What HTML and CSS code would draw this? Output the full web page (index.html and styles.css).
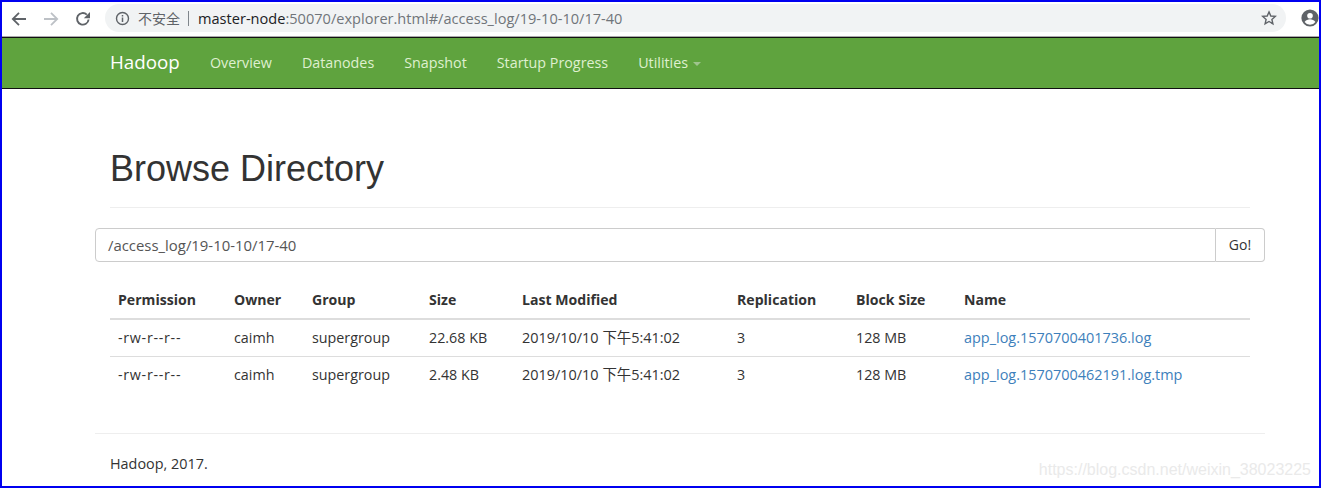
FILE: index.html
```html
<!DOCTYPE html>
<html lang="zh">
<head>
<meta charset="utf-8">
<title>Browsing HDFS</title>
<link rel="stylesheet" href="styles.css">
</head>
<body>
<div class="frame">
  <div class="chrome">
    <svg class="tool" viewBox="0 0 16 16" width="16" height="16"><path d="M15 8H2.5M8 1.8 1.8 8 8 14.2" fill="none" stroke="#5f6368" stroke-width="1.8"/></svg>
    <svg class="tool" viewBox="0 0 16 16" width="16" height="16"><path d="M1 8h12.5M8 1.8 14.2 8 8 14.2" fill="none" stroke="#bdc1c6" stroke-width="1.8"/></svg>
    <svg class="tool" viewBox="0 0 16 16" width="16" height="16"><path d="M13.6 8.5A5.8 5.8 0 1 1 11.8 3.6" fill="none" stroke="#5f6368" stroke-width="1.9"/><path d="M15 1v6.2H8.8z" fill="#5f6368"/></svg>
    <div class="omnibox">
      <svg class="info" viewBox="0 0 16 16" width="15" height="15"><circle cx="8" cy="8" r="6.4" fill="none" stroke="#5f6368" stroke-width="1.5"/><path d="M7.2 7h1.6v4.6H7.2zM7.2 4.2h1.6v1.6H7.2z" fill="#5f6368"/></svg>
      <span class="insecure">不安全</span>
      <span class="sep"></span>
      <span class="url"><span class="host">master-node</span>:50070/explorer.html#/access_log/19-10-10/17-40</span>
      <svg class="star" viewBox="0 0 16 16" width="16" height="16"><path d="M8 1.9 9.8 6l4.500.4-3.400 3 1 4.400L8 11.500l-3.900 2.300 1-4.400-3.400-3L6.200 6z" fill="none" stroke="#5f6368" stroke-width="1.4"/></svg>
    </div>
    <svg class="avatar" viewBox="0 0 18 18" width="18" height="18"><circle cx="9" cy="9" r="8.600" fill="#5f6368"/><circle cx="9" cy="6.800" r="2.800" fill="#fff"/><path d="M3.600 13c1.200-2 3.400-2.800 5.400-2.800s4.200.8 5.400 2.800A6.800 6.800 0 0 1 9 15.800 6.800 6.800 0 0 1 3.600 13z" fill="#fff"/></svg>
  </div>
  <nav class="navbar">
    <a class="brand">Hadoop</a>
    <a class="nav-link">Overview</a>
    <a class="nav-link">Datanodes</a>
    <a class="nav-link">Snapshot</a>
    <a class="nav-link">Startup Progress</a>
    <a class="nav-link">Utilities<span class="caret"></span></a>
  </nav>
  <main class="container">
    <div class="page-header"><h1>Browse Directory</h1></div>
    <div class="input-group">
      <div class="path-input">/access_log/19-10-10/17-40</div>
      <div class="go-btn">Go!</div>
    </div>
    <table class="listing">
      <colgroup>
        <col class="c-perm"><col class="c-owner"><col class="c-group"><col class="c-size"><col class="c-mod"><col class="c-rep"><col class="c-block"><col class="c-name">
      </colgroup>
      <thead>
        <tr><th>Permission</th><th>Owner</th><th>Group</th><th>Size</th><th>Last Modified</th><th>Replication</th><th>Block Size</th><th>Name</th></tr>
      </thead>
      <tbody>
        <tr><td class="perm">-rw-r--r--</td><td>caimh</td><td>supergroup</td><td>22.68 KB</td><td class="num">2019/10/10 下午5:41:02</td><td>3</td><td>128 MB</td><td class="num"><a class="file">app_log.1570700401736.log</a></td></tr>
        <tr><td class="perm">-rw-r--r--</td><td>caimh</td><td>supergroup</td><td>2.48 KB</td><td class="num">2019/10/10 下午5:41:02</td><td>3</td><td>128 MB</td><td class="num"><a class="file">app_log.1570700462191.log.tmp</a></td></tr>
      </tbody>
    </table>
    <hr class="foot-rule">
    <footer class="footer">Hadoop, 2017.</footer>
  </main>
  <div class="watermark">https://blog.csdn.net/weixin_38023225</div>
</div>
</body>
</html>
```
FILE: styles.css
```css
* { box-sizing: border-box; }
html, body { margin: 0; padding: 0; height: 100%; }
body { background: #fff; overflow: hidden; }
.frame {
  position: relative;
  width: 1321px;
  height: 488px;
  border: 2px solid #0000f0;
  font-family: "Open Sans", "Noto Sans CJK SC", sans-serif;
  font-size: 14px;
  color: #333;
  overflow: hidden;
}
.chrome {
  height: 35px;
  display: flex;
  align-items: center;
  padding-left: 9px;
  padding-bottom: 1px;
  background: #fff;
  gap: 16px;
}
.tool { flex: none; }
.omnibox {
  flex: none;
  width: 1181px;
  height: 28px;
  margin-left: -2px;
  margin-top: -2px;
  background: #f1f3f4;
  border-radius: 14px;
  display: flex;
  align-items: center;
  padding-left: 10px;
  padding-right: 9px;
}
.info { flex: none; }
.insecure { margin-left: 8px; font-size: 14px; color: #5f6368; }
.sep { width: 1px; height: 15px; background: #80868b; margin: 0 9px 0 8px; }
.url { font-size: 14.58px; color: #70757a; white-space: nowrap; }
.host { color: #202124; }
.star { margin-left: auto; }
.avatar { margin-left: -1px; margin-top: -2px; }
.navbar {
  height: 52px;
  background: #5fa33e;
  border-top: 1px solid #111;
  border-bottom: 1px solid #111;
  box-shadow: 0 -1px 0 #aaa;
  display: flex;
  align-items: center;
  padding-left: 108px;
  padding-bottom: 2px;
}
.brand { font-size: 18.8px; color: #fff; margin-right: 30px; }
.nav-link { font-size: 14.3px; color: #dff0d0; margin-right: 30px; }
.caret {
  display: inline-block;
  margin-left: 5px;
  vertical-align: middle;
  border-top: 4px solid #9fc48e;
  border-left: 4px solid transparent;
  border-right: 4px solid transparent;
}
.container { width: 1170px; margin-left: 93px; }
.page-header { margin: 0 15px; height: 119px; border-bottom: 1px solid #eee; padding-top: 60px; }
h1 {
  margin: 0;
  font-family: "Liberation Sans", Arial, sans-serif;
  font-weight: 500;
  font-size: 36px;
  line-height: 40px;
  color: #333;
}
.input-group { display: flex; height: 34px; margin-top: 20px; }
.path-input {
  flex: 1;
  border: 1px solid #ccc;
  border-radius: 4px 0 0 4px;
  padding: 6px 12px;
  font-size: 14.9px;
  line-height: 20px;
  color: #555;
}
.go-btn {
  width: 49px;
  border: 1px solid #ccc;
  border-left: 0;
  border-radius: 0 4px 4px 0;
  text-align: center;
  line-height: 32px;
}
.listing { width: 1140px; margin: 20px 15px 0; border-collapse: collapse; table-layout: fixed; }
.c-perm { width: 116px; }
.c-owner { width: 78px; }
.c-group { width: 117px; }
.c-size { width: 93px; }
.c-mod { width: 215px; }
.c-rep { width: 119px; }
.c-block { width: 108px; }
.c-name { width: 294px; }
th, td { padding: 8px; text-align: left; line-height: 20px; white-space: nowrap; }
th { font-size: 14.1px; font-weight: 700; border-bottom: 2px solid #ddd; }
td { height: 37px; font-size: 14.3px; }
.num { font-size: 14.45px; }
.perm { letter-spacing: .7px; }
tbody tr:first-child td { border-bottom: 1px solid #ddd; }
.file { color: #3d80bb; }
.foot-rule { margin: 39px 0 0; border: 0; border-top: 1px solid #eee; }
.footer { padding: 20px 15px 0; font-size: 14.4px; line-height: 20px; }
.watermark {
  position: absolute;
  right: 8px;
  bottom: 7px;
  font-family: "Liberation Sans", Arial, sans-serif;
  font-size: 16px;
  color: #eaeaea;
}
```
